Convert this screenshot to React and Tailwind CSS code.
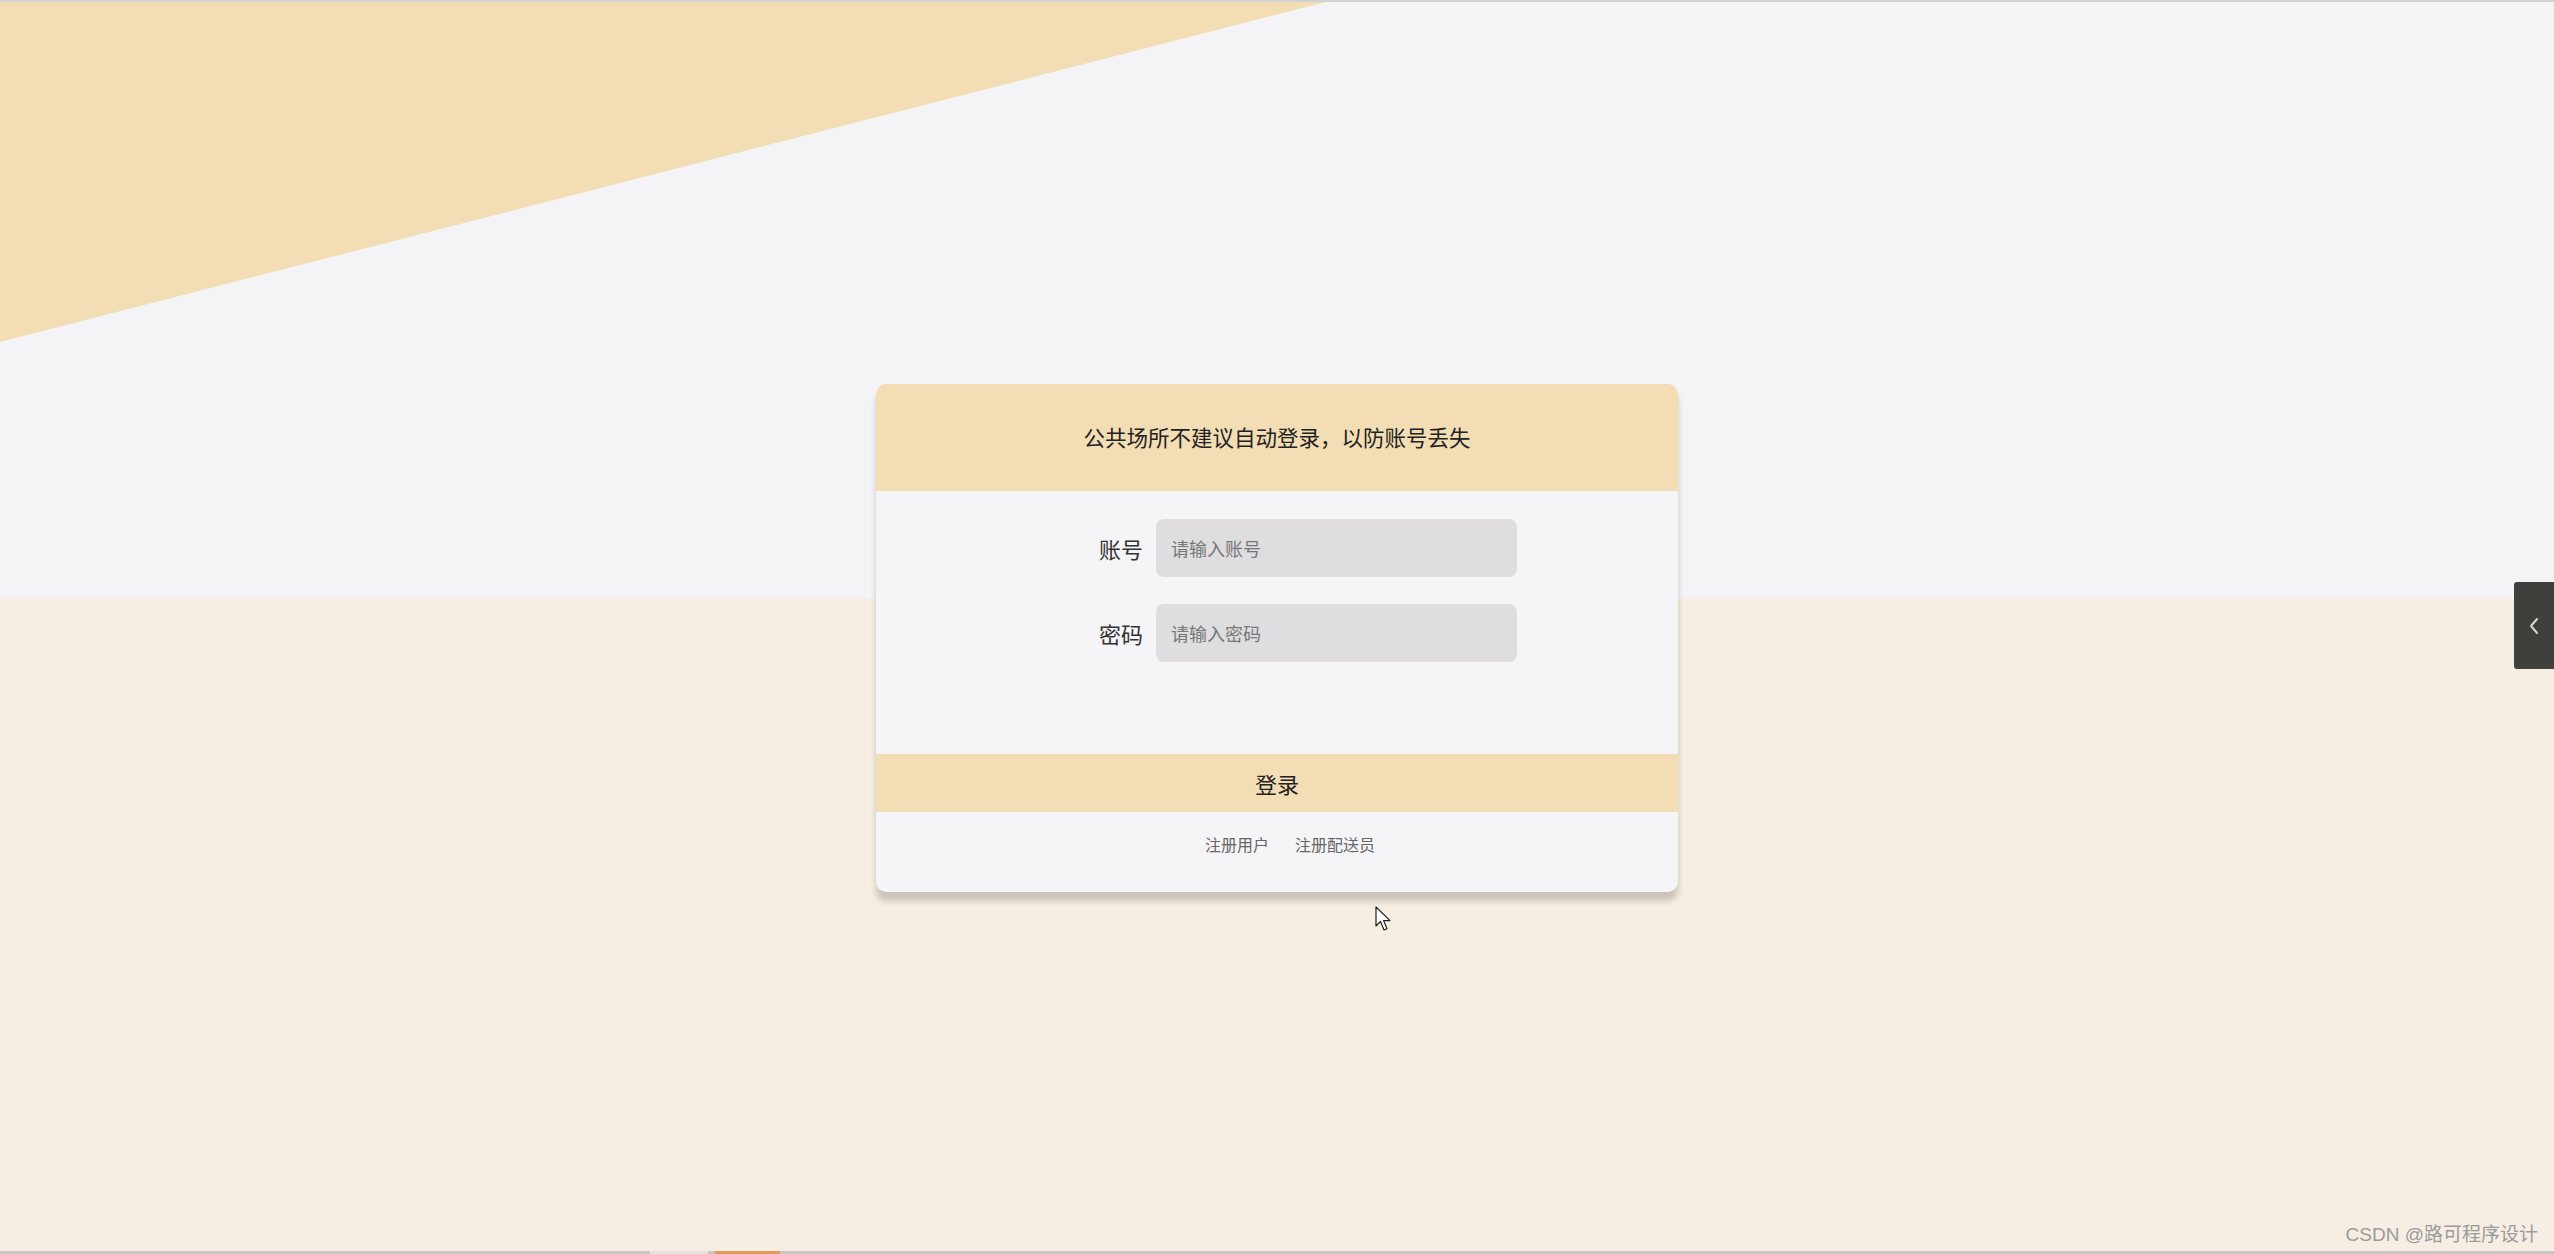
import React from "react";

const cjk = { fontFamily: '"Noto Sans CJK SC", "Noto Sans", sans-serif' };

const Field = ({ label, placeholder, type }) => (
  <div className="flex items-center justify-center pl-[16px]">
    <label className="w-[103px] pr-[13px] text-right text-[22px] leading-[28px] text-[#333]">
      {label}
    </label>
    <input
      type={type}
      placeholder={placeholder}
      className="h-[58px] w-[361px] rounded-[8px] bg-[#dfdde0] px-[15px] text-[18px] text-[#333] outline-none placeholder:text-[#777]"
      style={cjk}
    />
  </div>
);

const App = () => {
  return (
    <div className="relative h-[1254px] w-full overflow-hidden" style={cjk}>
      {/* background layers */}
      <div className="absolute inset-0 flex flex-col">
        <div className="h-[599px] border-t-2 border-[#d2d2d4] bg-[#f4f3f6]" />
        <div className="flex-1 bg-[#f6eee2]" />
        <div className="flex h-[3px] bg-[#c9c5c1]">
          <div className="w-[650px]" />
          <div className="w-[58px] bg-[#e6e2de]" />
          <div className="w-[7px]" />
          <div className="w-[65px] bg-[#e79a58]" />
        </div>
      </div>
      <svg className="absolute left-0 top-0" width="1330" height="345">
        <polygon points="0,2 1326,2 0,342" fill="#f3ddb4" />
      </svg>

      {/* login card */}
      <div className="relative flex justify-center pt-[384px]">
        <div className="w-[802px] rounded-[10px] bg-[#f5f4f7] shadow-[0_9px_6px_rgba(0,0,0,0.18)]">
          <div className="flex h-[107px] items-center justify-center rounded-t-[10px] bg-[#f3ddb4] text-[21.5px] text-[#222]">
            公共场所不建议自动登录，以防账号丢失
          </div>
          <div className="flex flex-col gap-[27px] pt-[28px]">
            <Field label="账号" placeholder="请输入账号" type="text" />
            <Field label="密码" placeholder="请输入密码" type="password" />
          </div>
          <button className="mt-[92px] flex h-[58px] w-full items-center justify-center bg-[#f3ddb4] text-[22px] text-[#222]">
            登录
          </button>
          <div className="flex justify-center gap-[26px] pb-[38px] pl-[26px] pt-[22px] text-[16px] leading-[20px] text-[#666]">
            <span>注册用户</span>
            <span>注册配送员</span>
          </div>
        </div>
      </div>

      {/* side tab */}
      <div className="absolute right-0 top-[582px] flex h-[87px] w-[40px] items-center justify-center rounded-l-[3px] bg-[#3f3f3c]">
        <svg width="12" height="20" viewBox="0 0 12 20" fill="none">
          <path d="M9 3 L3 10 L9 17" stroke="#d6d6d6" strokeWidth="2" strokeLinecap="round" strokeLinejoin="round" />
        </svg>
      </div>

      {/* cursor */}
      <svg className="absolute left-[1375px] top-[906px]" width="18" height="27" viewBox="0 0 18 27">
        <path
          d="M1 1 L1 20 L5.5 15.5 L9 24 L12 22.8 L8.6 14.6 L15 14.6 Z"
          fill="#fff"
          stroke="#222"
          strokeWidth="1.2"
          strokeLinejoin="round"
        />
      </svg>

      {/* watermark */}
      <div
        className="absolute bottom-[8px] right-[16px] text-[19px] leading-[22px] text-[#9b9b9b]"
        style={{ fontFamily: '"Liberation Sans", "Noto Sans CJK SC", sans-serif' }}
      >
        CSDN @路可程序设计
      </div>
    </div>
  );
};

export default App;
